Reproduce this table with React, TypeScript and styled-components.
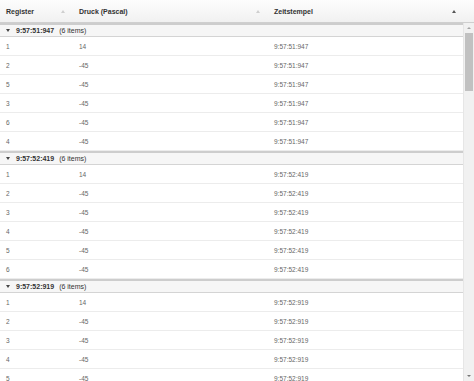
import styled, { createGlobalStyle } from "styled-components";

const GlobalStyle = createGlobalStyle`
    html, body {
        margin:0;
        padding:0;
        background:#fff;
    }
    body {
        font-family:"Liberation Sans", Arial, sans-serif;
        overflow:hidden;
    }
`;

const Grid = styled.div`
    width:474px;
    height:381px;
    display:flex;
    flex-direction:column;
    overflow:hidden;
    background:#fff;
`;

const HeaderRow = styled.div`
    height:22px;
    flex:none;
    display:grid;
    grid-template-columns:73px 195px 1fr;
    background:linear-gradient(#fdfdfd, #f1f1f1);
    border-bottom:1px solid #cfcfcf;
`;

const HeaderCell = styled.div<{ $last?: boolean }>`
    display:flex;
    align-items:center;
    justify-content:space-between;
    padding:0 ${(p) => (p.$last ? "18px" : "8px")} 0 6px;
    font-size:7px;
    font-weight:bold;
    color:#333;
`;

const SortArrow = styled.span<{ $active?: boolean }>`
    width:0;
    height:0;
    border-left:2.5px solid transparent;
    border-right:2.5px solid transparent;
    border-bottom:3px solid ${(p) => (p.$active ? "#555" : "#cfcfcf")};
`;

const Body = styled.div`
    flex:1;
    display:flex;
    min-height:0;
`;

const Rows = styled.div`
    flex:1;
    overflow:hidden;
`;

const GroupRow = styled.div`
    height:11px;
    display:flex;
    align-items:center;
    gap:5px;
    padding:0 6px;
    background:#f6f6f6;
    border-top:2px solid #cdcdcd;
    border-bottom:1px solid #d4d4d4;
    font-size:7px;
    color:#333;
    b{
        font-weight:bold;
    }
`;

const Caret = styled.span`
    width:0;
    height:0;
    border-left:2.5px solid transparent;
    border-right:2.5px solid transparent;
    border-top:3px solid #444;
    margin-right:1px;
`;

const DataRow = styled.div`
    height:18px;
    display:grid;
    grid-template-columns:73px 195px 1fr;
    align-items:center;
    border-bottom:1px solid #ececec;
    font-size:6.5px;
    color:#666;
`;

const Cell = styled.div`
    padding-left:6px;
`;

const Scrollbar = styled.div`
    width:10px;
    flex:none;
    display:flex;
    flex-direction:column;
    background:#f1f1f1;
    border-left:1px solid #e6e6e6;
`;

const ScrollButton = styled.div<{ $down?: boolean }>`
    height:10px;
    display:flex;
    align-items:center;
    justify-content:center;
    &::after{
        content:"";
        border-left:2px solid transparent;
        border-right:2px solid transparent;
        ${(p) => (p.$down ? "border-top:2px solid #777;" : "border-bottom:2px solid #a3a3a3;")}
    }
`;

const Thumb = styled.div`
    height:58px;
    margin:0 1px;
    background:#c1c1c1;
`;

const Track = styled.div`
    flex:1;
`;

interface IRow {
    register: number;
    druck: number;
}

interface IGroup {
    stamp: string;
    rows: IRow[];
}

const groups: IGroup[] = [
    {
        stamp: "9:57:51:947",
        rows: [
            { register: 1, druck: 14 },
            { register: 2, druck: -45 },
            { register: 5, druck: -45 },
            { register: 3, druck: -45 },
            { register: 6, druck: -45 },
            { register: 4, druck: -45 },
        ],
    },
    {
        stamp: "9:57:52:419",
        rows: [
            { register: 1, druck: 14 },
            { register: 2, druck: -45 },
            { register: 3, druck: -45 },
            { register: 4, druck: -45 },
            { register: 5, druck: -45 },
            { register: 6, druck: -45 },
        ],
    },
    {
        stamp: "9:57:52:919",
        rows: [
            { register: 1, druck: 14 },
            { register: 2, druck: -45 },
            { register: 3, druck: -45 },
            { register: 4, druck: -45 },
            { register: 5, druck: -45 },
            { register: 6, druck: -45 },
        ],
    },
];

function App() {
    return (
        <Grid>
            <GlobalStyle />
            <HeaderRow>
                <HeaderCell>
                    Register <SortArrow />
                </HeaderCell>
                <HeaderCell>
                    Druck (Pascal) <SortArrow />
                </HeaderCell>
                <HeaderCell $last>
                    Zeitstempel <SortArrow $active />
                </HeaderCell>
            </HeaderRow>
            <Body>
                <Rows>
                    {groups.map((g) => (
                        <div key={g.stamp}>
                            <GroupRow>
                                <Caret />
                                <b>{g.stamp}</b>
                                <span>(6 items)</span>
                            </GroupRow>
                            {g.rows.map((r, i) => (
                                <DataRow key={i}>
                                    <Cell>{r.register}</Cell>
                                    <Cell>{r.druck}</Cell>
                                    <Cell>{g.stamp}</Cell>
                                </DataRow>
                            ))}
                        </div>
                    ))}
                </Rows>
                <Scrollbar>
                    <ScrollButton />
                    <Thumb />
                    <Track />
                    <ScrollButton $down />
                </Scrollbar>
            </Body>
        </Grid>
    );
}

export default App;
